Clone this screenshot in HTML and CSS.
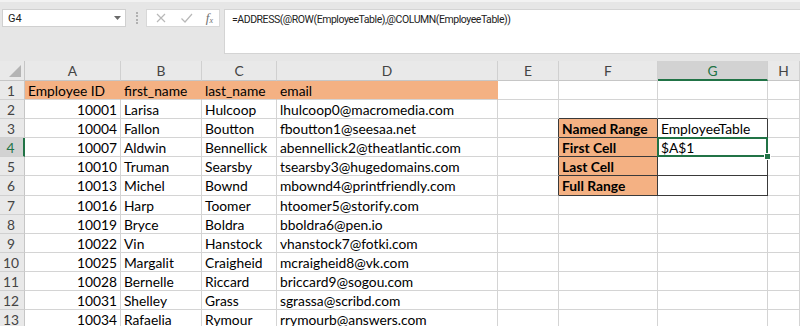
FILE: index.html
```html
<!DOCTYPE html>
<html lang="en">
<head>
  <meta charset="UTF-8">
  <title>EmployeeTable - Excel</title>
  <link rel="stylesheet" href="styles.css">
</head>
<body>
  <div class="toolbar">
    <div class="name-box">
      <span>G4</span>
      <svg class="caret" width="7" height="4" viewBox="0 0 7 4"><path d="M0 0h7L3.5 4z" fill="#6a6a6a"/></svg>
    </div>
    <div class="grip"></div>
    <div class="buttons">
      <svg width="12" height="12" viewBox="0 0 12 12"><path d="M2 2l8 8M10 2l-8 8" stroke="#b8b8b8" stroke-width="1.2"/></svg>
      <svg width="13" height="12" viewBox="0 0 13 12"><path d="M1.5 6.5l3.5 3.5 7-8" stroke="#b8b8b8" stroke-width="1.2" fill="none"/></svg>
      <span class="fx">f<sub>x</sub></span>
    </div>
    <div class="formula">=ADDRESS(@ROW(EmployeeTable),@COLUMN(EmployeeTable))</div>
  </div>

  <div class="sheet">
    <!-- column headers -->
    <div class="corner"></div>
    <div class="ch">A</div><div class="ch">B</div><div class="ch">C</div><div class="ch">D</div>
    <div class="ch">E</div><div class="ch">F</div><div class="ch active">G</div><div class="ch">H</div>

    <div class="rh">1</div>
    <div class="c fill">Employee ID</div><div class="c fill">first_name</div><div class="c fill">last_name</div><div class="c fill">email</div>
    <div class="c"></div><div class="c"></div><div class="c"></div><div class="c"></div>

    <div class="rh">2</div>
    <div class="c num">10001</div><div class="c">Larisa</div><div class="c">Hulcoop</div><div class="c">lhulcoop0@macromedia.com</div>
    <div class="c"></div><div class="c edge-b"></div><div class="c edge-b"></div><div class="c"></div>

    <div class="rh">3</div>
    <div class="c num">10004</div><div class="c">Fallon</div><div class="c">Boutton</div><div class="c">fboutton1@seesaa.net</div>
    <div class="c edge-r"></div><div class="c fill box b">Named Range</div><div class="c box">EmployeeTable</div><div class="c"></div>

    <div class="rh sel">4</div>
    <div class="c num">10007</div><div class="c">Aldwin</div><div class="c">Bennellick</div><div class="c">abennellick2@theatlantic.com</div>
    <div class="c edge-r"></div><div class="c fill box b">First Cell</div><div class="c box current">$A$1</div><div class="c"></div>

    <div class="rh">5</div>
    <div class="c num">10010</div><div class="c">Truman</div><div class="c">Searsby</div><div class="c">tsearsby3@hugedomains.com</div>
    <div class="c edge-r"></div><div class="c fill box b">Last Cell</div><div class="c box"></div><div class="c"></div>

    <div class="rh">6</div>
    <div class="c num">10013</div><div class="c">Michel</div><div class="c">Bownd</div><div class="c">mbownd4@printfriendly.com</div>
    <div class="c edge-r"></div><div class="c fill box b">Full Range</div><div class="c box"></div><div class="c"></div>

    <div class="rh">7</div>
    <div class="c num">10016</div><div class="c">Harp</div><div class="c">Toomer</div><div class="c">htoomer5@storify.com</div>
    <div class="c"></div><div class="c"></div><div class="c"></div><div class="c"></div>

    <div class="rh">8</div>
    <div class="c num">10019</div><div class="c">Bryce</div><div class="c">Boldra</div><div class="c">bboldra6@pen.io</div>
    <div class="c"></div><div class="c"></div><div class="c"></div><div class="c"></div>

    <div class="rh">9</div>
    <div class="c num">10022</div><div class="c">Vin</div><div class="c">Hanstock</div><div class="c">vhanstock7@fotki.com</div>
    <div class="c"></div><div class="c"></div><div class="c"></div><div class="c"></div>

    <div class="rh">10</div>
    <div class="c num">10025</div><div class="c">Margalit</div><div class="c">Craigheid</div><div class="c">mcraigheid8@vk.com</div>
    <div class="c"></div><div class="c"></div><div class="c"></div><div class="c"></div>

    <div class="rh">11</div>
    <div class="c num">10028</div><div class="c">Bernelle</div><div class="c">Riccard</div><div class="c">briccard9@sogou.com</div>
    <div class="c"></div><div class="c"></div><div class="c"></div><div class="c"></div>

    <div class="rh">12</div>
    <div class="c num">10031</div><div class="c">Shelley</div><div class="c">Grass</div><div class="c">sgrassa@scribd.com</div>
    <div class="c"></div><div class="c"></div><div class="c"></div><div class="c"></div>

    <div class="rh">13</div>
    <div class="c num">10034</div><div class="c">Rafaelia</div><div class="c">Rymour</div><div class="c">rrymourb@answers.com</div>
    <div class="c"></div><div class="c"></div><div class="c"></div><div class="c"></div>
  </div>
</body>
</html>
```

FILE: styles.css
```css
* {
  box-sizing: border-box;
  margin: 0;
  padding: 0;
}

html, body {
  width: 800px;
  height: 326px;
  overflow: hidden;
  background: #ffffff;
  font-family: Lato, 'Liberation Sans', sans-serif;
}

/* Formula bar */
.toolbar {
  height: 61px;
  background: #e6e6e6;
  border-top: 2px solid #f2f2f2;
  display: flex;
  align-items: flex-start;
  padding-top: 7px;
  font-family: Roboto, 'Liberation Sans', sans-serif;
}

.name-box {
  margin-left: 2px;
  width: 124px;
  height: 18px;
  background: #ffffff;
  border: 1px solid #d0d0d0;
  display: flex;
  align-items: center;
  justify-content: space-between;
  padding: 0 4px 0 5px;
  font-size: 11px;
  color: #222;
}

.grip {
  width: 2px;
  height: 12px;
  margin: 3px 8px 0 10px;
  border-left: 2px dotted #b0b0b0;
}

.buttons {
  width: 74px;
  height: 18px;
  background: #ffffff;
  border: 1px solid #d8d8d8;
  display: flex;
  align-items: center;
  justify-content: space-between;
  padding: 0 6px 0 8px;
}

.fx {
  font-family: 'Liberation Serif', serif;
  font-style: italic;
  font-size: 13px;
  color: #707070;
  line-height: 1;
}

.fx sub {
  font-size: 8px;
  vertical-align: -1px;
}

.formula {
  margin-left: 4px;
  flex: 1;
  height: 45px;
  background: #ffffff;
  border: 1px solid #d4d4d4;
  border-right: none;
  padding: 3px 0 0 7px;
  font-size: 10.5px;
  color: #222;
  letter-spacing: -0.45px;
}

/* Grid */
.sheet {
  display: grid;
  grid-template-columns: 25px 96px 81px 75px 221px 61px 99px 110px 32px;
  grid-template-rows: 19.6px repeat(13, 19.17px);
  font-size: 13.8px;
  color: #000;
}

.corner {
  background: #e9e9e9;
  border-right: 1px solid #c6c6c6;
  border-bottom: 1px solid #c6c6c6;
  position: relative;
}

.corner::after {
  content: '';
  position: absolute;
  right: 3px;
  bottom: 3px;
  border-style: solid;
  border-width: 0 0 12px 12px;
  border-color: transparent transparent #b4b4b4 transparent;
}

.ch {
  background: #e9e9e9;
  border-right: 1px solid #d0d0d0;
  border-bottom: 1px solid #c6c6c6;
  color: #444;
  text-align: center;
  line-height: 19px;
}

.ch.active {
  background: #d2d2d2;
  color: #217346;
  border-bottom: 2px solid #217346;
}

.rh {
  background: #e9e9e9;
  border-right: 1px solid #c6c6c6;
  border-bottom: 1px solid #d0d0d0;
  color: #444;
  text-align: center;
  line-height: 19px;
  padding-right: 2px;
}

.rh.sel {
  background: #d2d2d2;
  color: #217346;
  border-right: 2px solid #217346;
}

.c {
  border-right: 1px solid #d4d4d4;
  border-bottom: 1px solid #d4d4d4;
  padding: 0 3px;
  line-height: 19px;
  white-space: nowrap;
  overflow: visible;
}

.num {
  text-align: right;
}

.b {
  font-weight: 700;
}

.fill {
  background: #f4b183;
  border-right-color: #f4b183;
}

.box {
  border-right-color: #3a3a3a;
  border-bottom-color: #3a3a3a;
}

.edge-r {
  border-right-color: #3a3a3a;
}

.edge-b {
  border-bottom-color: #3a3a3a;
}

/* Active cell */
.current {
  position: relative;
}

.current::before {
  content: '';
  position: absolute;
  left: -1px;
  top: -1px;
  right: -1px;
  bottom: -1px;
  border: 2px solid #217346;
}

.current::after {
  content: '';
  position: absolute;
  right: -4px;
  bottom: -4px;
  width: 5px;
  height: 5px;
  background: #217346;
  border: 1px solid #ffffff;
}
```
